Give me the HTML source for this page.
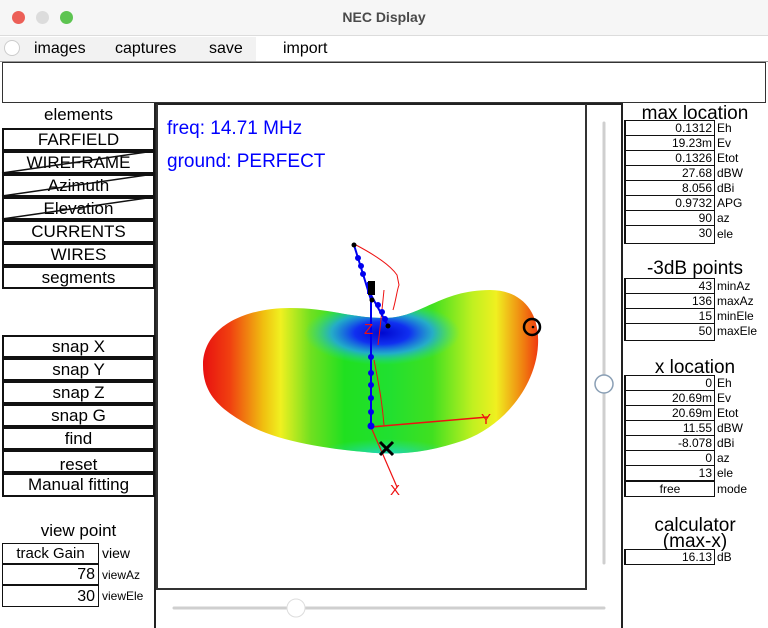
<!DOCTYPE html>
<html><head><meta charset="utf-8"><style>
*{margin:0;padding:0;box-sizing:border-box}
body{width:768px;height:628px;overflow:hidden;background:#fff;font-family:"Liberation Sans",sans-serif;position:relative;color:#000}
.a{position:absolute}
.btn{position:absolute;left:2px;width:153px;height:23px;border:2px solid #111;background:#fff;text-align:center;font-size:17px;line-height:19px;white-space:nowrap;overflow:hidden}
.fld{position:absolute;left:624px;width:91px;height:16px;border:1px solid #111;border-left:2px solid #111;text-align:right;font-size:12px;line-height:14px;padding-right:2px;background:#fff}
.lb{position:absolute;left:717px;font-size:12px;line-height:14px}
.h{position:absolute;left:622px;width:146px;text-align:center;font-size:19px;line-height:20px}
</style></head><body>
<div class="a" style="left:0;top:0;width:768px;height:36px;background:#f6f6f6;border-bottom:1px solid #dcdcdc"></div>
<div class="a" style="left:12px;top:11px;width:13px;height:13px;border-radius:50%;background:#ec5f57"></div>
<div class="a" style="left:36px;top:11px;width:13px;height:13px;border-radius:50%;background:#dcdcdc"></div>
<div class="a" style="left:60px;top:11px;width:13px;height:13px;border-radius:50%;background:#5dc451"></div>
<div class="a" style="left:0;top:9px;width:768px;text-align:center;font-size:14px;font-weight:bold;color:#4a4a4a">NEC Display</div>
<div class="a" style="left:0;top:37px;width:256px;height:24px;background:#f2f2f2"></div>
<div class="a" style="left:4px;top:40px;width:16px;height:16px;border-radius:50%;border:1px solid #ccc;background:#fff"></div>
<div class="a" style="left:34px;top:40px;font-size:16px">images</div>
<div class="a" style="left:115px;top:40px;font-size:16px">captures</div>
<div class="a" style="left:209px;top:40px;font-size:16px">save</div>
<div class="a" style="left:283px;top:40px;font-size:16px">import</div>
<div class="a" style="left:0;top:61px;width:768px;height:1px;background:#999"></div>
<div class="a" style="left:2px;top:62px;width:764px;height:41px;border:1px solid #333"></div>
<div class="a" style="left:0;top:103px;width:156px;height:525px;border-right:2px solid #222"></div>
<div class="a" style="left:2px;top:105px;width:153px;text-align:center;font-size:17px">elements</div>
<div class="btn" style="top:128px">FARFIELD</div>
<div class="btn" style="top:151px">WIREFRAME</div>
<div class="btn" style="top:174px">Azimuth</div>
<div class="btn" style="top:197px">Elevation</div>
<div class="btn" style="top:220px">CURRENTS</div>
<div class="btn" style="top:243px">WIRES</div>
<div class="btn" style="top:266px">segments</div>
<svg class="a" style="left:0;top:0" width="160" height="300"><g stroke="#111" stroke-width="1.5"><line x1="2" y1="173" x2="154" y2="151"/><line x1="2" y1="196" x2="154" y2="174"/><line x1="2" y1="219" x2="154" y2="197"/></g></svg>
<div class="btn" style="top:335px">snap X</div>
<div class="btn" style="top:358px">snap Y</div>
<div class="btn" style="top:381px">snap Z</div>
<div class="btn" style="top:404px">snap G</div>
<div class="btn" style="top:427px">find</div>
<div class="btn" style="top:450px;line-height:26px">reset</div>
<div class="btn" style="top:473px;height:24px">Manual fitting</div>
<div class="a" style="left:2px;top:521px;width:153px;text-align:center;font-size:17px">view point</div>
<div class="a" style="left:2px;top:543px;width:97px;height:21px;border:1px solid #111;font-size:15px;text-align:center;line-height:19px">track Gain</div>
<div class="a" style="left:102px;top:545px;font-size:14px">view</div>
<div class="a" style="left:2px;top:564px;width:97px;height:21px;border:1px solid #111;font-size:16px;text-align:right;padding-right:3px;line-height:20px">78</div>
<div class="a" style="left:102px;top:568px;font-size:12px">viewAz</div>
<div class="a" style="left:2px;top:585px;width:97px;height:22px;border:1px solid #111;font-size:16px;text-align:right;padding-right:3px;line-height:21px">30</div>
<div class="a" style="left:102px;top:589px;font-size:12px">viewEle</div>
<div class="a" style="left:156px;top:103px;width:467px;height:525px;border-top:2px solid #222;border-right:2px solid #222"></div>
<div class="a" style="left:156px;top:104px;width:431px;height:486px;border:2px solid #333;border-top:none"></div>
<div class="a" style="left:167px;top:118px;font-size:19px;color:#0000ff">freq: 14.71 MHz</div>
<div class="a" style="left:167px;top:151px;font-size:19px;color:#0000ff">ground: PERFECT</div>
<svg class="a" style="left:0;top:0" width="768" height="628">
<defs>
<linearGradient id="g" x1="203" y1="0" x2="540" y2="0" gradientUnits="userSpaceOnUse">
<stop offset="0" stop-color="#e81010"/><stop offset="0.08" stop-color="#f04010"/><stop offset="0.18" stop-color="#f0c010"/><stop offset="0.23" stop-color="#f0f020"/><stop offset="0.32" stop-color="#70e020"/><stop offset="0.42" stop-color="#20e020"/><stop offset="0.55" stop-color="#20e030"/><stop offset="0.68" stop-color="#40e020"/><stop offset="0.8" stop-color="#c0f020"/><stop offset="0.87" stop-color="#f0f020"/><stop offset="0.95" stop-color="#f08010"/><stop offset="1" stop-color="#f03010"/>
</linearGradient>
<radialGradient id="b" cx="0.5" cy="0.5" r="0.5">
<stop offset="0" stop-color="#0008d0"/><stop offset="0.35" stop-color="#1030f0"/><stop offset="0.65" stop-color="#20a0f0" stop-opacity="0.8"/><stop offset="1" stop-color="#20e0a0" stop-opacity="0"/>
</radialGradient>
<radialGradient id="c" cx="0.5" cy="0.5" r="0.5">
<stop offset="0" stop-color="#20d0f0" stop-opacity="0.8"/><stop offset="1" stop-color="#20e0c0" stop-opacity="0"/>
</radialGradient>
<clipPath id="k"><path d="M203,365 C203,330 240,308 290,308 C330,308 350,318 385,318 C420,318 440,290 490,290 C520,290 540,310 538,345 C536,385 505,425 465,440 C430,452 400,456 365,452 C320,448 270,440 240,420 C215,405 203,390 203,365 Z"/></clipPath>
</defs>
<g clip-path="url(#k)">
<rect x="200" y="285" width="345" height="175" fill="url(#g)"/>
<ellipse cx="385" cy="455" rx="70" ry="16" fill="url(#c)"/>
<ellipse cx="382" cy="333" rx="78" ry="32" fill="url(#b)"/>
</g>
<g fill="none" stroke="#ee1111" stroke-width="1">
<path d="M356,245 C375,255 390,265 397,275 L399,285 C397,290 396,300 393,310"/>
<path d="M384,290 C382,310 380,330 378,345"/>
<line x1="371" y1="300" x2="371" y2="427"/>
<path d="M374,360 C378,380 382,400 384,425"/>
<line x1="371" y1="427" x2="488" y2="417" stroke-width="1.5"/>
<line x1="371" y1="427" x2="397" y2="487" stroke-width="1.2"/>
</g>
<g stroke="#0000ee" stroke-width="2" fill="#0000ee">
<line x1="354" y1="245" x2="371" y2="300"/><line x1="371" y1="295" x2="388" y2="326"/>
<line x1="371" y1="300" x2="371" y2="427"/>
<rect x="368" y="283" width="6" height="10"/>
<circle cx="358" cy="258" r="2"/><circle cx="361" cy="266" r="2"/><circle cx="363" cy="274" r="2"/>
<circle cx="378" cy="305" r="2"/><circle cx="382" cy="312" r="2"/><circle cx="385" cy="319" r="2"/>
<circle cx="371" cy="357" r="2"/><circle cx="371" cy="373" r="2"/><circle cx="371" cy="385" r="2"/><circle cx="371" cy="398" r="2"/><circle cx="371" cy="412" r="2"/><circle cx="371" cy="426" r="2.5"/>
</g>
<g fill="#000"><circle cx="354" cy="245" r="2.5"/><circle cx="388" cy="326" r="2.5"/><rect x="368" y="281" width="7" height="14"/><circle cx="372" cy="300" r="2.5"/></g>
<text x="364" y="334" font-family="Liberation Sans" font-size="15" fill="#ee1111">Z</text>
<text x="481" y="424" font-family="Liberation Sans" font-size="15" fill="#ee1111">Y</text>
<text x="390" y="495" font-family="Liberation Sans" font-size="15" fill="#ee1111">X</text>
<g stroke="#000" stroke-width="3"><line x1="380" y1="442" x2="393" y2="455"/><line x1="393" y1="442" x2="380" y2="455"/></g>
<circle cx="532" cy="327" r="8" fill="none" stroke="#000" stroke-width="2.5"/>
<circle cx="533" cy="327" r="1.3" fill="#000"/>
<line x1="604" y1="123" x2="604" y2="563" stroke="#cfcfcf" stroke-width="3" stroke-linecap="round"/>
<circle cx="604" cy="384" r="9" fill="#fff" stroke="#8a9fb5" stroke-width="1.5"/>
<line x1="174" y1="608" x2="604" y2="608" stroke="#cfcfcf" stroke-width="3" stroke-linecap="round"/>
<circle cx="296" cy="608" r="9" fill="#fff" stroke="#ddd" stroke-width="1"/>
</svg>
<div class="h" style="top:104px">max location</div>
<div class="fld" style="top:120px">0.1312</div><div class="lb" style="top:121px">Eh</div>
<div class="fld" style="top:135px">19.23m</div><div class="lb" style="top:136px">Ev</div>
<div class="fld" style="top:150px">0.1326</div><div class="lb" style="top:151px">Etot</div>
<div class="fld" style="top:165px">27.68</div><div class="lb" style="top:166px">dBW</div>
<div class="fld" style="top:180px">8.056</div><div class="lb" style="top:181px">dBi</div>
<div class="fld" style="top:195px">0.9732</div><div class="lb" style="top:196px">APG</div>
<div class="fld" style="top:210px">90</div><div class="lb" style="top:211px">az</div>
<div class="fld" style="top:225px;height:19px">30</div><div class="lb" style="top:227px">ele</div>
<div class="h" style="top:259px">-3dB points</div>
<div class="fld" style="top:278px">43</div><div class="lb" style="top:279px">minAz</div>
<div class="fld" style="top:293px">136</div><div class="lb" style="top:294px">maxAz</div>
<div class="fld" style="top:308px">15</div><div class="lb" style="top:309px">minEle</div>
<div class="fld" style="top:323px;height:18px">50</div><div class="lb" style="top:324px">maxEle</div>
<div class="h" style="top:358px">x location</div>
<div class="fld" style="top:375px">0</div><div class="lb" style="top:376px">Eh</div>
<div class="fld" style="top:390px">20.69m</div><div class="lb" style="top:391px">Ev</div>
<div class="fld" style="top:405px">20.69m</div><div class="lb" style="top:406px">Etot</div>
<div class="fld" style="top:420px">11.55</div><div class="lb" style="top:421px">dBW</div>
<div class="fld" style="top:435px">-8.078</div><div class="lb" style="top:436px">dBi</div>
<div class="fld" style="top:450px">0</div><div class="lb" style="top:451px">az</div>
<div class="fld" style="top:465px">13</div><div class="lb" style="top:466px">ele</div>
<div class="fld" style="top:481px;text-align:center;padding-right:0">free</div><div class="lb" style="top:482px">mode</div>
<div class="h" style="top:516px">calculator</div>
<div class="h" style="top:532px">(max-x)</div>
<div class="fld" style="top:549px">16.13</div><div class="lb" style="top:550px">dB</div>
</body></html>
